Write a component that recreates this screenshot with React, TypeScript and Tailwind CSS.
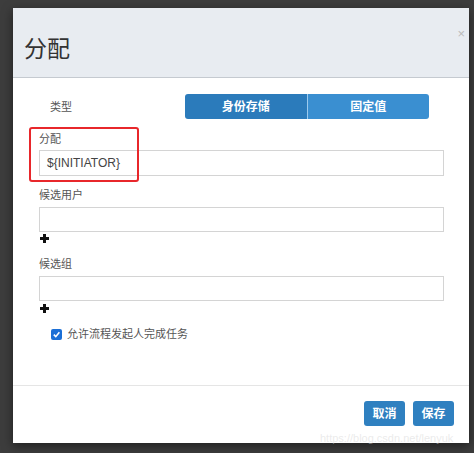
import * as React from 'react';

const FONT = '"Liberation Sans", "Noto Sans CJK SC", sans-serif';

function PlusIcon() {
  return (
    <svg width="9" height="9" viewBox="0 0 9 9" className="block">
      <rect x="3" y="0" width="3" height="9" fill="#111" />
      <rect x="0" y="3" width="9" height="3" fill="#111" />
    </svg>
  );
}

function Field({ label, value, labelTop, inputTop, height }: { label: string; value?: string; labelTop: string; inputTop: string; height: string }) {
  return (
    <div>
      <div className={`${labelTop} text-[11px] leading-[14px] text-[#555]`}>{label}</div>
      <div className={`${inputTop} ${height} flex items-center border border-[#d4d4d4] bg-white px-[7px] text-[12px] text-[#444]`}>
        {value}
      </div>
    </div>
  );
}

export default function App() {
  return (
    <div className="relative w-[474px] h-[453px] overflow-hidden bg-[#3d3d3d]" style={{ fontFamily: FONT }}>
      <div className="ml-[13px] mt-[8px] w-[456px] h-[435px] flex flex-col bg-white shadow-[0_3px_10px_rgba(0,0,0,0.5)] relative">
        {/* Header */}
        <div className="relative h-[70px] shrink-0 bg-[#e8ecf1] border-b border-[#c5cad0] pl-[11px] pt-[27px]">
          <h1 className="text-[23px] leading-[28px] text-[#333]">分配</h1>
          <span className="absolute right-[4px] top-[19px] text-[13px] leading-[14px] text-[#bbb]">×</span>
        </div>

        {/* Body */}
        <div className="flex-1 pl-[26px] pr-[25px] pt-[16px]">
          <div className="flex items-center h-[25px]">
            <span className="ml-[11px] w-[135px] text-[11px] leading-[14px] text-[#555]">类型</span>
            <div className="flex h-[25px] w-[244px] rounded-[3px] overflow-hidden text-[12px] font-bold text-white">
              <div className="flex-1 flex items-center justify-center bg-[#2b7bbb] border-r border-[#9ccaee]">身份存储</div>
              <div className="flex-1 flex items-center justify-center bg-[#3a8fd1]">固定值</div>
            </div>
          </div>

          <Field label="分配" value="${INITIATOR}" labelTop="mt-[13px]" inputTop="mt-[4px]" height="h-[26px]" />
          <Field label="候选用户" labelTop="mt-[12px]" inputTop="mt-[5px]" height="h-[25px]" />
          <div className="mt-[1px] ml-[1px] h-[10px] flex items-center"><PlusIcon /></div>
          <Field label="候选组" labelTop="mt-[14px]" inputTop="mt-[5px]" height="h-[25px]" />
          <div className="mt-[2px] ml-[1px] h-[10px] flex items-center"><PlusIcon /></div>

          <div className="mt-[14px] ml-[12px] flex items-center gap-[5px] h-[14px]">
            <div className="w-[11px] h-[11px] rounded-[2px] bg-[#1b6fd6] flex items-center justify-center">
              <svg width="9" height="9" viewBox="0 0 10 10">
                <path d="M2 5.2 L4.2 7.4 L8.2 2.6" fill="none" stroke="white" strokeWidth="1.8" />
              </svg>
            </div>
            <span className="text-[11px] leading-[14px] text-[#555]">允许流程发起人完成任务</span>
          </div>
        </div>

        {/* Footer */}
        <div className="h-[58px] shrink-0 border-t border-[#e5e5e5] flex justify-end gap-[8px] pt-[15px] pr-[15px]">
          <button className="h-[25px] w-[41px] rounded-[3px] bg-[#2f80c0] text-[12px] font-bold text-white">取消</button>
          <button className="h-[25px] w-[41px] rounded-[3px] bg-[#2f80c0] text-[12px] font-bold text-white">保存</button>
        </div>

        {/* annotation box */}
        <div className="absolute left-[16px] top-[119px] w-[110px] h-[55px] border-2 border-[#e8272b] rounded-[3px]" />
      </div>

      <span className="absolute left-[320px] top-[431px] text-[11px] leading-[14px] text-[rgba(215,215,215,0.5)]">https://blog.csdn.net/lenyuk</span>
    </div>
  );
}
